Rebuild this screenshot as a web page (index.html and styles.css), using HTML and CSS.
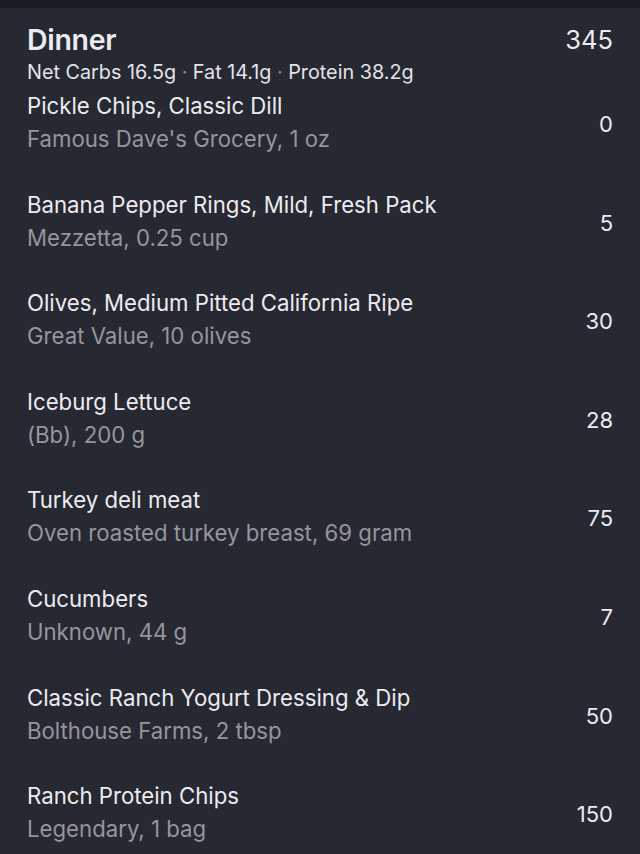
FILE: index.html
```html
<!DOCTYPE html>
<html>
<head>
<meta charset="utf-8">
<link rel="stylesheet" href="styles.css">
</head>
<body>
<div class="band"></div>
<section class="card">
  <header class="meal">
    <div class="meal-head">
      <h1 class="meal-name">Dinner</h1>
      <span class="meal-total">345</span>
    </div>
    <p class="macros">Net Carbs 16.5g<span class="dot">·</span>Fat 14.1g<span class="dot">·</span>Protein 38.2g</p>
  </header>
  <ul class="items">
    <li class="item"><div class="info"><div class="name">Pickle Chips, Classic Dill</div><div class="detail">Famous Dave's Grocery, 1 oz</div></div><span class="cal">0</span></li>
    <li class="item"><div class="info"><div class="name">Banana Pepper Rings, Mild, Fresh Pack</div><div class="detail">Mezzetta, 0.25 cup</div></div><span class="cal">5</span></li>
    <li class="item"><div class="info"><div class="name">Olives, Medium Pitted California Ripe</div><div class="detail">Great Value, 10 olives</div></div><span class="cal">30</span></li>
    <li class="item"><div class="info"><div class="name">Iceburg Lettuce</div><div class="detail">(Bb), 200 g</div></div><span class="cal">28</span></li>
    <li class="item"><div class="info"><div class="name">Turkey deli meat</div><div class="detail">Oven roasted turkey breast, 69 gram</div></div><span class="cal">75</span></li>
    <li class="item"><div class="info"><div class="name">Cucumbers</div><div class="detail">Unknown, 44 g</div></div><span class="cal">7</span></li>
    <li class="item"><div class="info"><div class="name">Classic Ranch Yogurt Dressing &amp; Dip</div><div class="detail">Bolthouse Farms, 2 tbsp</div></div><span class="cal">50</span></li>
    <li class="item"><div class="info"><div class="name">Ranch Protein Chips</div><div class="detail">Legendary, 1 bag</div></div><span class="cal">150</span></li>
  </ul>
</section>
</body>
</html>
```
FILE: styles.css
```css
html, body {
  margin: 0;
  padding: 0;
  background: #262832;
  font-family: Inter, "Noto Sans", sans-serif;
  color: #ececf0;
  overflow: hidden;
  height: 854px;
}
.band {
  height: 8px;
  background: #1a1b23;
}
.card {
  padding: 16px 27px 0 27px;
  background: #262832;
}
.meal-head {
  display: flex;
  justify-content: space-between;
  align-items: center;
  height: 32px;
}
.meal-name {
  margin: 0;
  font-size: 28.5px;
  font-weight: 600;
  line-height: 32px;
  letter-spacing: -0.3px;
  color: #ececf0;
}
.meal-total {
  font-size: 25.5px;
  font-weight: 400;
  line-height: 32px;
  color: #ececf0;
}
.macros {
  margin: 0;
  font-size: 19.8px;
  line-height: 33px;
  color: #e4e4e8;
}
.dot {
  color: #8a8b92;
  margin: 0 5.5px;
}
.items {
  list-style: none;
  margin: 0;
  padding: 0;
}
.item {
  display: flex;
  justify-content: space-between;
  align-items: center;
  margin-bottom: 32.6px;
}
.name {
  font-size: 22.2px;
  line-height: 33px;
  color: #ececf0;
}
.detail {
  font-size: 22.2px;
  line-height: 33px;
  color: #95969c;
}
.cal {
  font-size: 22px;
  line-height: 33px;
  padding-top: 5px;
  color: #ececf0;
}
```
